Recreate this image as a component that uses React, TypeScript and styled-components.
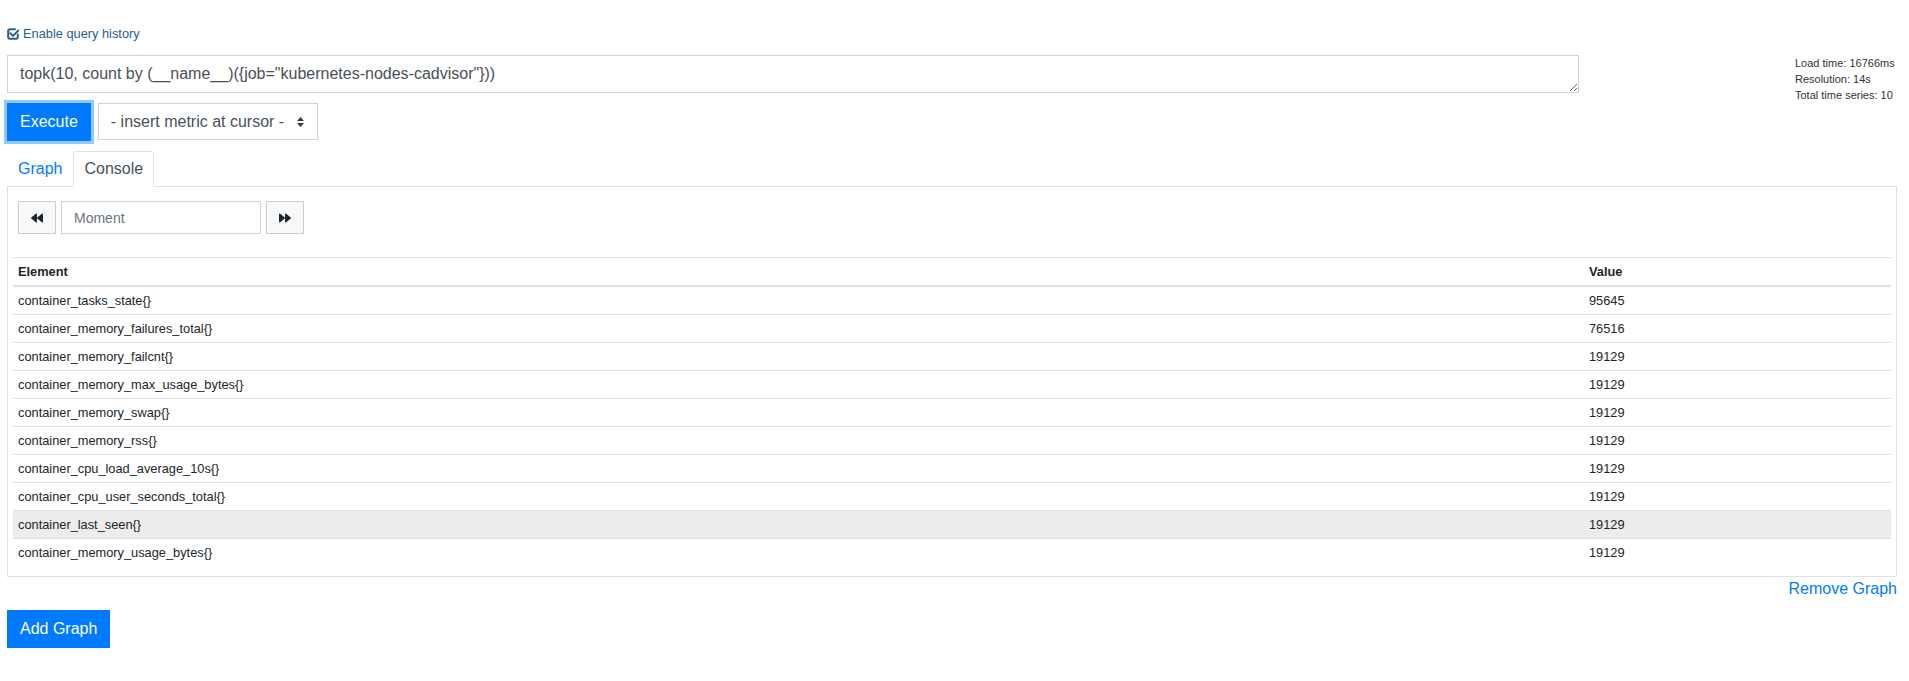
import { FC } from 'react';

import styled, { createGlobalStyle } from 'styled-components';
import { FaBackward, FaForward } from 'react-icons/fa';

const rows = [
  { name: 'container_tasks_state{}', value: '95645' },
  { name: 'container_memory_failures_total{}', value: '76516' },
  { name: 'container_memory_failcnt{}', value: '19129' },
  { name: 'container_memory_max_usage_bytes{}', value: '19129' },
  { name: 'container_memory_swap{}', value: '19129' },
  { name: 'container_memory_rss{}', value: '19129' },
  { name: 'container_cpu_load_average_10s{}', value: '19129' },
  { name: 'container_cpu_user_seconds_total{}', value: '19129' },
  { name: 'container_last_seen{}', value: '19129' },
  { name: 'container_memory_usage_bytes{}', value: '19129' },
];

const CheckIcon: FC = () => (
  <CheckSvg width='12' height='12' viewBox='0 0 12 12'>
    <path d='M8 1.2 H3 Q1.2 1.2 1.2 3 V9 Q1.2 10.8 3 10.8 H9 Q10.8 10.8 10.8 9 V6.5' />
    <path d='M3.4 5.3 L6 7.9 L11.4 2.5' />
  </CheckSvg>
);

const App: FC = () => {
  return (
    <Page>
      <GlobalStyle />
      <HistoryToggle>
        <CheckIcon />
        Enable query history
      </HistoryToggle>
      <QueryRow>
        <QueryInput
          rows={1}
          defaultValue='topk(10, count by (__name__)({job="kubernetes-nodes-cadvisor"}))'
        />
        <Stats>
          <div>Load time: 16766ms</div>
          <div>Resolution: 14s</div>
          <div>Total time series: 10</div>
        </Stats>
      </QueryRow>
      <ActionRow>
        <PrimaryButton focused>Execute</PrimaryButton>
        <SelectBox>
          <MetricSelect defaultValue=''>
            <option value=''>- insert metric at cursor -</option>
          </MetricSelect>
          <SelectArrows width='7' height='10' viewBox='0 0 7 10'>
            <path d='M3.5 0 L7 4 L0 4 Z' />
            <path d='M0 6 L7 6 L3.5 10 Z' />
          </SelectArrows>
        </SelectBox>
      </ActionRow>
      <Tabs>
        <Tab>Graph</Tab>
        <Tab active>Console</Tab>
      </Tabs>
      <Panel>
        <MomentRow>
          <StepButton>
            <FaBackward size={12} />
          </StepButton>
          <MomentInput placeholder='Moment' />
          <StepButton>
            <FaForward size={12} />
          </StepButton>
        </MomentRow>
        <DataTable>
          <thead>
            <tr>
              <Th>Element</Th>
              <Th wide>Value</Th>
            </tr>
          </thead>
          <tbody>
            {rows.map((row, i) => (
              <Tr key={row.name} hovered={i === 8}>
                <Td>{row.name}</Td>
                <Td>{row.value}</Td>
              </Tr>
            ))}
          </tbody>
        </DataTable>
      </Panel>
      <RemoveLink href='#'>Remove Graph</RemoveLink>
      <PrimaryButton>Add Graph</PrimaryButton>
    </Page>
  );
};

const GlobalStyle = createGlobalStyle`
  *, *::before, *::after {
    box-sizing: border-box;
  }
  body {
    margin: 0;
    background: #fff;
    color: #212529;
    font-family: "Liberation Sans", Arial, sans-serif;
    font-size: 16px;
    line-height: 1.5;
  }
`;

const Page = styled.div`
  display: flex;
  flex-direction: column;
  align-items: flex-start;
  padding: 24px 12px 0 7px;
`;

const HistoryToggle = styled.label`
  display: flex;
  align-items: center;
  gap: 4px;
  font-size: 12.8px;
  line-height: 19px;
  color: #2d5d8a;
  cursor: pointer;
`;

const CheckSvg = styled.svg`
  fill: none;
  stroke: #2d5d8a;
  stroke-width: 2;
  stroke-linecap: round;
  stroke-linejoin: round;
`;

const QueryRow = styled.div`
  display: flex;
  justify-content: space-between;
  align-items: flex-start;
  width: 100%;
  margin-top: 12px;
`;

const QueryInput = styled.textarea`
  width: 1572px;
  height: 38px;
  padding: 6px 12px;
  border: 1px solid #ced4da;
  border-radius: 0;
  font-family: inherit;
  font-size: 16px;
  line-height: 24px;
  color: #495057;
  resize: vertical;
  overflow: hidden;
  outline: none;
`;

const Stats = styled.div`
  width: 102px;
  font-size: 11px;
  line-height: 16px;
  color: #333;
  white-space: nowrap;
`;

const ActionRow = styled.div`
  display: flex;
  align-items: flex-start;
  gap: 7px;
`;

const PrimaryButton = styled.button<{ focused?: boolean }>`
  height: 38px;
  padding: 6px 12px;
  border: 1px solid #007bff;
  border-radius: 0;
  background: #007bff;
  color: #fff;
  font-family: inherit;
  font-size: 16px;
  line-height: 24px;
  cursor: pointer;
  box-shadow: ${(p) => (p.focused ? '0 0 0 3px rgba(38, 143, 255, 0.5)' : 'none')};
`;

const SelectBox = styled.div`
  position: relative;
  width: 220px;
  height: 37px;
`;

const MetricSelect = styled.select`
  appearance: none;
  width: 100%;
  height: 100%;
  padding: 0 28px 0 12px;
  border: 1px solid #ced4da;
  border-radius: 0;
  background: #fff;
  color: #495057;
  font-family: inherit;
  font-size: 16px;
  outline: none;
`;

const SelectArrows = styled.svg`
  position: absolute;
  right: 14px;
  top: 14px;
  fill: #343a40;
  pointer-events: none;
`;

const Tabs = styled.div`
  display: flex;
  width: 100%;
  margin-top: 10px;
  border-bottom: 1px solid #dee2e6;
`;

const Tab = styled.a<{ active?: boolean }>`
  display: block;
  margin-bottom: -1px;
  padding: 5px 10px;
  border: 1px solid ${(p) => (p.active ? '#dee2e6' : 'transparent')};
  border-bottom-color: ${(p) => (p.active ? '#fff' : 'transparent')};
  border-radius: 4px 4px 0 0;
  background: ${(p) => (p.active ? '#fff' : 'transparent')};
  color: ${(p) => (p.active ? '#495057' : '#007bff')};
  font-size: 16px;
  line-height: 24px;
  cursor: pointer;
`;

const Panel = styled.div`
  width: 100%;
  padding: 5px;
  border: 1px solid #dee2e6;
  border-top: none;
`;

const MomentRow = styled.div`
  display: flex;
  gap: 5px;
  height: 33px;
  margin: 9px 0 0 5px;
`;

const StepButton = styled.button`
  display: flex;
  align-items: center;
  justify-content: center;
  width: 38px;
  padding: 0;
  border: 1px solid #ccc;
  border-radius: 0;
  background: #f8f9fa;
  color: #212529;
  cursor: pointer;
`;

const MomentInput = styled.input`
  width: 200px;
  padding: 0 12px;
  border: 1px solid #ced4da;
  border-radius: 0;
  font-family: inherit;
  font-size: 14px;
  color: #495057;
  outline: none;

  &::placeholder {
    color: #6c757d;
  }
`;

const DataTable = styled.table`
  width: 100%;
  margin: 23px 0 5px;
  border-collapse: collapse;
  font-size: 12.8px;
  line-height: 19px;
  color: #212529;
`;

const Th = styled.th<{ wide?: boolean }>`
  width: ${(p) => (p.wide ? '307px' : 'auto')};
  padding: 4px 5px;
  border-top: 1px solid #dee2e6;
  border-bottom: 2px solid #dee2e6;
  text-align: left;
  font-weight: bold;
`;

const Tr = styled.tr<{ hovered?: boolean }>`
  background: ${(p) => (p.hovered ? '#ececec' : 'transparent')};
`;

const Td = styled.td`
  padding: 4px 5px;
  border-top: 1px solid #dee2e6;
`;

const RemoveLink = styled.a`
  align-self: flex-end;
  color: #007bff;
  font-size: 16px;
  line-height: 24px;
  text-decoration: none;
  margin-bottom: 9px;
`;

export default App;
